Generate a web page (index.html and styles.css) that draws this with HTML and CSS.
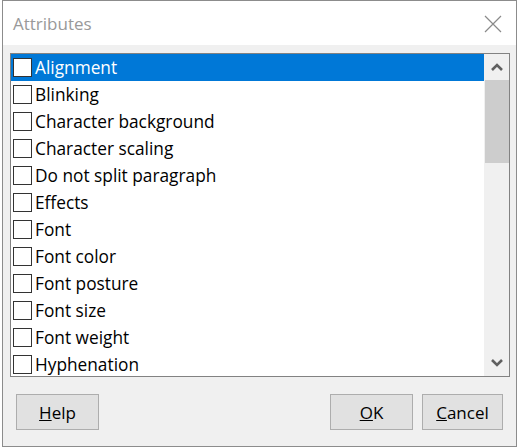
FILE: index.html
```html
<!DOCTYPE html>
<html lang="en">
<head>
    <meta charset="UTF-8">
    <meta name="viewport" content="width=device-width, initial-scale=1.0">
    <title>Attributes</title>
    <link rel="stylesheet" href="styles.css">
</head>
<body>
    <div class="dialog">
        <div class="titlebar">
            <span class="title">Attributes</span>
            <svg class="close" width="18" height="18" viewBox="0 0 18 18">
                <path d="M1 1 L17 17 M17 1 L1 17" stroke="#8a8a8a" stroke-width="1.2" fill="none"/>
            </svg>
        </div>
        <div class="content">
            <div class="listbox">
                <div class="items">
                    <div class="item selected"><span class="check"></span>Alignment</div>
                    <div class="item"><span class="check"></span>Blinking</div>
                    <div class="item"><span class="check"></span>Character background</div>
                    <div class="item"><span class="check"></span>Character scaling</div>
                    <div class="item"><span class="check"></span>Do not split paragraph</div>
                    <div class="item"><span class="check"></span>Effects</div>
                    <div class="item"><span class="check"></span>Font</div>
                    <div class="item"><span class="check"></span>Font color</div>
                    <div class="item"><span class="check"></span>Font posture</div>
                    <div class="item"><span class="check"></span>Font size</div>
                    <div class="item"><span class="check"></span>Font weight</div>
                    <div class="item"><span class="check"></span>Hyphenation</div>
                </div>
                <div class="scrollbar">
                    <div class="arrow">
                        <svg width="12" height="8" viewBox="0 0 12 8">
                            <path d="M1 7 L6 2 L11 7" stroke="#606060" stroke-width="2.6" fill="none"/>
                        </svg>
                    </div>
                    <div class="thumb"></div>
                    <div class="track"></div>
                    <div class="arrow">
                        <svg width="12" height="8" viewBox="0 0 12 8">
                            <path d="M1 1 L6 6 L11 1" stroke="#606060" stroke-width="2.6" fill="none"/>
                        </svg>
                    </div>
                </div>
            </div>
            <div class="buttons">
                <button class="btn"><u>H</u>elp</button>
                <div class="right">
                    <button class="btn"><u>O</u>K</button>
                    <button class="btn"><u>C</u>ancel</button>
                </div>
            </div>
        </div>
    </div>
</body>
</html>
```

FILE: styles.css
```css
body {
    margin: 0;
    background-color: #fff;
    font-family: "Open Sans", "Noto Sans", sans-serif;
    font-size: 17.3px;
}

.dialog {
    margin-left: 2px;
    width: 513px;
    height: 445px;
    border: 1px solid #8c8c8c;
    background-color: #f0f0f0;
    display: flex;
    flex-direction: column;
}

.titlebar {
    height: 44px;
    background-color: #fff;
    display: flex;
    align-items: center;
    justify-content: space-between;
    padding: 0 14px 0 10px;
}

.title {
    color: #999;
    font-size: 17px;
    margin-top: 1px;
}

.close {
    margin-top: 1px;
}

.content {
    padding: 8px 6px 0 7px;
}

.listbox {
    width: 498px;
    height: 322px;
    border: 1px solid #828282;
    background-color: #fff;
    display: flex;
    overflow: hidden;
}

.items {
    flex: 1;
}

.item {
    height: 27px;
    display: flex;
    align-items: center;
    color: #000;
    white-space: nowrap;
}

.item.selected {
    background-color: #0078d7;
    color: #fff;
}

.check {
    width: 17px;
    height: 17px;
    border: 1px solid #333;
    background-color: #fff;
    margin: 0 3px 0 2px;
    flex-shrink: 0;
}

.scrollbar {
    width: 25px;
    background-color: #f0f0f0;
    display: flex;
    flex-direction: column;
}

.arrow {
    height: 26px;
    display: flex;
    align-items: center;
    justify-content: center;
}

.thumb {
    height: 83px;
    margin-left: 1px;
    background-color: #cdcdcd;
}

.track {
    flex: 1;
}

.buttons {
    display: flex;
    justify-content: space-between;
    padding: 17px 7px 0 6px;
}

.right {
    display: flex;
    gap: 9px;
}

.btn {
    font-family: "Open Sans", "Noto Sans", sans-serif;
    font-size: 17px;
    color: #000;
    width: 83px;
    height: 36px;
    padding: 0;
    border: 1px solid #adadad;
    background-color: #e1e1e1;
}

.right .btn:last-child {
    width: 81px;
}
```
